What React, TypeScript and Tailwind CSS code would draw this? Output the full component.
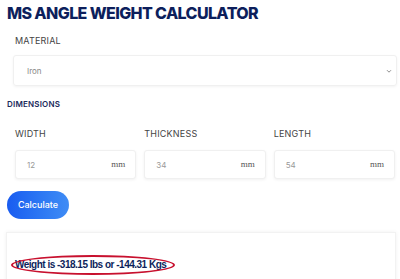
import React from "react";

function Field({ label, value }: { label: string; value: string }) {
  return (
    <div className="flex flex-col">
      <div className="h-[26px] pt-[10px] text-[9px] leading-[12px] text-[#444] tracking-[0.2px]">{label}</div>
      <div className="mt-[6px] h-[29px] flex items-center justify-between bg-white border border-[#f0f0f0] rounded-[3px] shadow-[0_1px_3px_rgba(0,0,0,0.06)] pl-[11px] pr-[10px]">
        <span className="text-[8px] text-[#999]">{value}</span>
        <span className="text-[9px] text-[#555] font-['Liberation_Serif',serif]">mm</span>
      </div>
    </div>
  );
}

export default function App() {
  return (
    <div className="w-[400px] h-[279px] overflow-hidden bg-white font-['Inter',sans-serif]">
      <div className="pl-[7px] pt-[2px]">
        <h1 className="text-[16px] leading-[22px] font-extrabold text-[#0d1f5c] tracking-[-0.6px]">MS ANGLE WEIGHT CALCULATOR</h1>
      </div>
      <div className="pl-[15px] mt-[11px] text-[9px] leading-[12px] text-[#444] tracking-[0.2px]">MATERIAL</div>
      <div className="ml-[13px] mr-[3px] mt-[8px] h-[31px] flex items-center justify-between border border-[#f0f0f0] rounded-[3px] shadow-[0_1px_3px_rgba(0,0,0,0.05)] pl-[13px] pr-[3px]">
        <span className="text-[8px] text-[#888]">Iron</span>
        <svg width="8" height="8" viewBox="0 0 10 10" fill="none" stroke="#888" strokeWidth="1.2">
          <path d="M2.5 4 L5 6.5 L7.5 4" />
        </svg>
      </div>
      <div className="pl-[7px] mt-[12px] text-[8px] leading-[12px] font-semibold text-[#1b2a5c] tracking-[0.2px]">DIMENSIONS</div>
      <div className="grid grid-cols-3 gap-x-[8px] pl-[15px] pr-[5px] mt-[8px]">
        <Field label="WIDTH" value="12" />
        <Field label="THICKNESS" value="34" />
        <Field label="LENGTH" value="54" />
      </div>
      <div className="pl-[7px] mt-[11px]">
        <button className="w-[62px] h-[28px] rounded-full bg-gradient-to-r from-[#1a5cf0] to-[#3f8cf5] text-white text-[9px] font-medium">Calculate</button>
      </div>
      <div className="ml-[6px] mr-[4px] mt-[13px] h-[60px] bg-white border border-[#f2f2f2] shadow-[0_0_4px_rgba(0,0,0,0.06)] pt-[22px] pl-[4px]">
        <div className="relative flex w-fit items-center h-[20px] pl-[4px] pr-[9px]">
          <span className="text-[10px] leading-[12px] font-bold text-[#0d1f5c] font-['Liberation_Sans',sans-serif] tracking-[-0.5px]">Weight is -318.15 lbs or -144.31 Kgs</span>
          <div className="absolute inset-0 border-2 border-[#c8102e] rounded-[50%]" />
        </div>
      </div>
    </div>
  );
}
